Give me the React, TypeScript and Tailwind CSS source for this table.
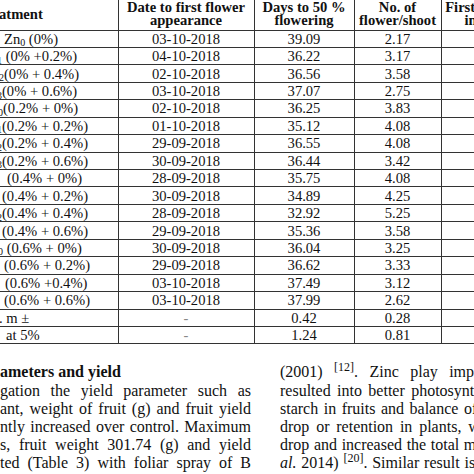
import React from 'react';

const S = ({ c }: { c: string }) => <sub className="text-[10px]">{c}</sub>;

type Row = { t: React.ReactNode; d: string; f: string; n: string };

const rows: Row[] = [
  { t: <span className="pl-[4px]">Zn<S c="0" /> (0%)</span>, d: '03-10-2018', f: '39.09', n: '2.17' },
  { t: <span className="-ml-[3px]"><S c="1" /> (0% +0.2%)</span>, d: '04-10-2018', f: '36.22', n: '3.17' },
  { t: <span className="-ml-[1px]"><S c="2" />(0% + 0.4%)</span>, d: '02-10-2018', f: '36.56', n: '3.58' },
  { t: <span className="-ml-[3px]"><S c="3" />(0% + 0.6%)</span>, d: '03-10-2018', f: '37.07', n: '2.75' },
  { t: <span className="-ml-[2px]"><S c="0" />(0.2% + 0%)</span>, d: '02-10-2018', f: '36.25', n: '3.83' },
  { t: <span className="-ml-[3px]"><S c="1" />(0.2% + 0.2%)</span>, d: '01-10-2018', f: '35.12', n: '4.08' },
  { t: <span className="-ml-[3px]"><S c="2" />(0.2% + 0.4%)</span>, d: '29-09-2018', f: '36.55', n: '4.08' },
  { t: <span className="-ml-[3px]"><S c="3" />(0.2% + 0.6%)</span>, d: '30-09-2018', f: '36.44', n: '3.42' },
  { t: <span className="pl-[7px]">(0.4% + 0%)</span>, d: '28-09-2018', f: '35.75', n: '4.08' },
  { t: <span className="pl-[2px]">(0.4% + 0.2%)</span>, d: '30-09-2018', f: '34.89', n: '4.25' },
  { t: <span className="-ml-[3px]"><S c="2" />(0.4% + 0.4%)</span>, d: '28-09-2018', f: '32.92', n: '5.25' },
  { t: <span className="pl-[2px]">(0.4% + 0.6%)</span>, d: '29-09-2018', f: '35.36', n: '3.58' },
  { t: <span className="-ml-[2px]"><S c="0" /> (0.6% + 0%)</span>, d: '30-09-2018', f: '36.04', n: '3.25' },
  { t: <span className="pl-[4px]">(0.6% + 0.2%)</span>, d: '29-09-2018', f: '36.62', n: '3.33' },
  { t: <span className="pl-[5px]">(0.6% +0.4%)</span>, d: '03-10-2018', f: '37.49', n: '3.12' },
  { t: <span className="pl-[4px]">(0.6% + 0.6%)</span>, d: '03-10-2018', f: '37.99', n: '2.62' },
  { t: <span className="-ml-[1px]">. m ±</span>, d: '-', f: '0.42', n: '0.28' },
  { t: <span className="pl-[6px]">at 5%</span>, d: '-', f: '1.24', n: '0.81' },
];

const Line = ({ children }: { children: React.ReactNode }) => (
  <div className="h-[18.2px] leading-[18.2px] text-justify [text-align-last:justify]">{children}</div>
);

export default function App() {
  return (
    <div className="w-[474px] h-[474px] overflow-hidden bg-white text-[#111] font-['Liberation_Serif',serif]">
      <table className="table-fixed border-collapse w-[534px] text-[14.6px]">
        <colgroup>
          <col className="w-[118px]" />
          <col className="w-[136px]" />
          <col className="w-[100px]" />
          <col className="w-[87px]" />
          <col className="w-[93px]" />
        </colgroup>
        <thead>
          <tr className="h-[30px]">
            <th className="p-0 text-left align-middle font-bold leading-[13.5px] border-b border-[#333]">
              <span className="-ml-[1px]">atment</span>
            </th>
            <th className="p-0 pt-[0.5px] text-center align-top font-bold leading-[13.5px] border-x border-b border-[#333]">
              Date to first flower<br />appearance
            </th>
            <th className="p-0 pt-[0.5px] text-center align-top font-bold leading-[13.5px] border-x border-b border-[#333]">
              Days to 50 %<br />flowering
            </th>
            <th className="p-0 pt-[0.5px] text-center align-top font-bold leading-[13.5px] border-x border-b border-[#333] whitespace-nowrap">
              No. of<br />flower/shoot
            </th>
            <th className="p-0 pt-[0.5px] pr-[2px] text-center align-top font-bold leading-[13.5px] border-x border-b border-[#333] whitespace-nowrap">
              First fruit set<br />in days
            </th>
          </tr>
        </thead>
        <tbody>
          {rows.map((r, i) => (
            <tr key={i} className="h-[17.45px]">
              <td className="p-0 h-[17.45px] leading-[16px] text-left whitespace-nowrap overflow-hidden border-b border-[#333]">{r.t}</td>
              <td className={`p-0 leading-[16px] text-center border border-[#333] ${r.d === '-' ? 'text-[#888]' : ''}`}>{r.d}</td>
              <td className="p-0 leading-[16px] text-center border border-[#333]">{r.f}</td>
              <td className="p-0 leading-[16px] text-center border border-[#333]">{r.n}</td>
              <td className="p-0 leading-[16px] text-center border border-[#333]"></td>
            </tr>
          ))}
        </tbody>
      </table>
      <div className="flex pt-[19px] text-[16px]">
        <div className="w-[251px] shrink-0">
          <div className="h-[18.2px] leading-[18.2px] font-bold whitespace-nowrap">ameters and yield</div>
          <Line>gation the yield parameter such as</Line>
          <Line>ant, weight of fruit (g) and fruit yield</Line>
          <Line>ntly increased over control. Maximum</Line>
          <Line>s, fruit weight 301.74 (g) and yield</Line>
          <Line>ted (Table 3) with foliar spray of B</Line>
        </div>
        <div className="w-[260px] shrink-0 ml-[29px] whitespace-nowrap">
          <div className="h-[18.2px] leading-[18.2px] [word-spacing:7.4px]">(2001) <sup>[12]</sup>. Zinc play important role</div>
          <div className="h-[18.2px] leading-[18.2px] [word-spacing:2.4px]">resulted into better photosynthesis and</div>
          <div className="h-[18.2px] leading-[18.2px] [word-spacing:1.5px]">starch in fruits and balance of hormones</div>
          <div className="h-[18.2px] leading-[18.2px] [word-spacing:2.8px]">drop or retention in plants, which reduce</div>
          <div className="h-[18.2px] leading-[18.2px] [word-spacing:0.6px]">drop and increased the total marketable</div>
          <div className="h-[18.2px] leading-[18.2px] [word-spacing:0.8px]"><i>al.</i> 2014) <sup>[20]</sup>. Similar result is reported</div>
        </div>
      </div>
    </div>
  );
}
